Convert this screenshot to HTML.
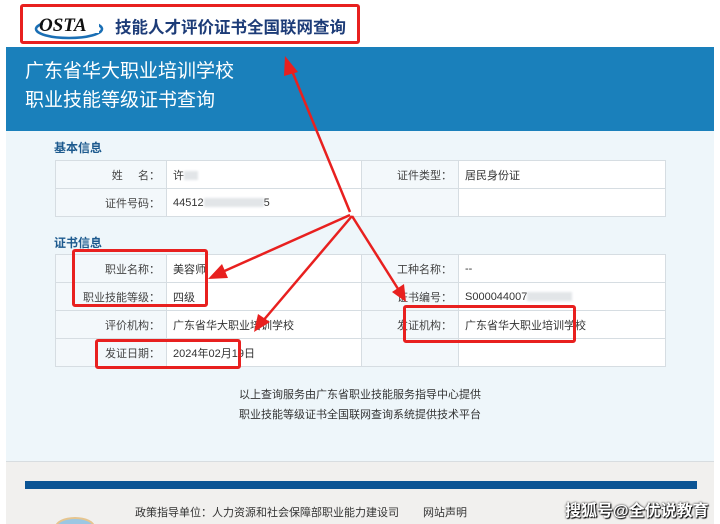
<!DOCTYPE html>
<html><head><meta charset="utf-8"><style>
*{margin:0;padding:0;box-sizing:border-box}
html,body{width:720px;height:524px;overflow:hidden}
body{background:#fff;position:relative;font-family:"Liberation Sans","Noto Sans CJK SC",sans-serif}
.hdr{position:absolute;left:20px;top:4px;width:340px;height:40px;border:3px solid #e8201f;border-radius:3px}
.hdr .t{position:absolute;left:92px;top:7px;font-size:16.5px;font-weight:bold;color:#1d3c78;white-space:nowrap}
.osta{position:absolute;left:16px;top:8px;font:italic bold 19px "Liberation Serif",serif;color:#111}
.banner{position:absolute;left:6px;top:47px;width:708px;height:84px;background:#1a80bb;color:#fff;font-size:19px;line-height:29px;padding:10px 0 0 19px}
.panel{position:absolute;left:6px;top:131px;width:708px;height:331px;background:#eef6fa;border-bottom:1px solid #d8dde0}
.sec{position:absolute;left:54px;font-size:12px;font-weight:bold;color:#1d5a8e}
table{position:absolute;left:55px;width:611px;border-collapse:collapse;font-size:11px;color:#333}
td{border:1px solid #d6dde2;height:28px;background:#fff;padding:0 6px}
td.l{background:#f3f8fb;text-align:right;color:#444}
.blur{display:inline-block;height:9px;background:#e2e5e8;vertical-align:middle;filter:blur(1px)}
.note{position:absolute;left:0;width:720px;text-align:center;font-size:11px;color:#333}
.foot{position:absolute;left:6px;top:462px;width:708px;height:62px;background:#f1f0ee}
.bar{position:absolute;left:25px;top:481px;width:672px;height:8px;background:#0b5494}
.box{position:absolute;border:3px solid #e8201f;border-radius:3px}
</style></head><body>
<div class="hdr"><svg style="position:absolute;left:10px;top:5px" width="80" height="30"><ellipse cx="36" cy="17" rx="33" ry="9" fill="none" stroke="#1a6fb5" stroke-width="2.5"/><rect x="10" y="6" width="56" height="15" fill="#fff"/></svg><div class="osta">OSTA</div><div class="t">技能人才评价证书全国联网查询</div></div>
<div class="banner">广东省华大职业培训学校<br>职业技能等级证书查询</div>
<div class="panel"></div>
<div class="sec" style="top:139px">基本信息</div>
<table style="top:160px">
<tr><td class="l" style="width:111px">姓&nbsp;&nbsp;&nbsp;&nbsp;&nbsp;名：</td><td style="width:195px">许<span class="blur" style="width:14px"></span></td><td class="l" style="width:97px">证件类型：</td><td>居民身份证</td></tr>
<tr><td class="l">证件号码：</td><td>44512<span class="blur" style="width:60px"></span>5</td><td class="l"></td><td></td></tr>
</table>
<div class="sec" style="top:234px">证书信息</div>
<table style="top:254px">
<tr><td class="l" style="width:111px">职业名称：</td><td style="width:195px">美容师</td><td class="l" style="width:97px">工种名称：</td><td>--</td></tr>
<tr><td class="l">职业技能等级：</td><td>四级</td><td class="l">证书编号：</td><td>S000044007<span class="blur" style="width:45px"></span></td></tr>
<tr><td class="l">评价机构：</td><td>广东省华大职业培训学校</td><td class="l">发证机构：</td><td>广东省华大职业培训学校</td></tr>
<tr><td class="l">发证日期：</td><td>2024年02月19日</td><td class="l"></td><td></td></tr>
</table>
<div class="note" style="top:386px">以上查询服务由广东省职业技能服务指导中心提供</div>
<div class="note" style="top:406px">职业技能等级证书全国联网查询系统提供技术平台</div>
<div class="foot"></div>
<div class="bar"></div>
<div style="position:absolute;left:135px;top:504px;font-size:11px;color:#333">政策指导单位：人力资源和社会保障部职业能力建设司</div>
<div style="position:absolute;left:423px;top:504px;font-size:11px;color:#333">网站声明</div>
<div style="position:absolute;left:565px;top:497px;font-size:16px;font-weight:bold;color:#fff;text-shadow:0 0 2px #000,1px 1px 1px #000">搜狐号@全优说教育</div>
<div style="position:absolute;left:55px;top:517px;width:40px;height:20px;border-radius:50%;background:#9cc7e3;border:2px solid #e6c58f"></div>
<div class="box" style="left:72px;top:249px;width:136px;height:58px"></div>
<div class="box" style="left:95px;top:339px;width:146px;height:30px"></div>
<div class="box" style="left:403px;top:305px;width:173px;height:38px"></div>
<svg style="position:absolute;left:0;top:0" width="720" height="524">
<g stroke="#e8201f" stroke-width="2.5" fill="#e8201f">
<line x1="350" y1="212" x2="290" y2="66"/><polygon points="285,56 298,72 284,76" stroke="none"/>
<line x1="350" y1="215" x2="220" y2="273"/><polygon points="208,279 222,264 228,278" stroke="none"/>
<line x1="352" y1="216" x2="262" y2="322"/><polygon points="254,332 258,314 270,322" stroke="none"/>
<line x1="352" y1="216" x2="400" y2="292"/><polygon points="406,302 392,292 404,284" stroke="none"/>
</g></svg>
</body></html>
